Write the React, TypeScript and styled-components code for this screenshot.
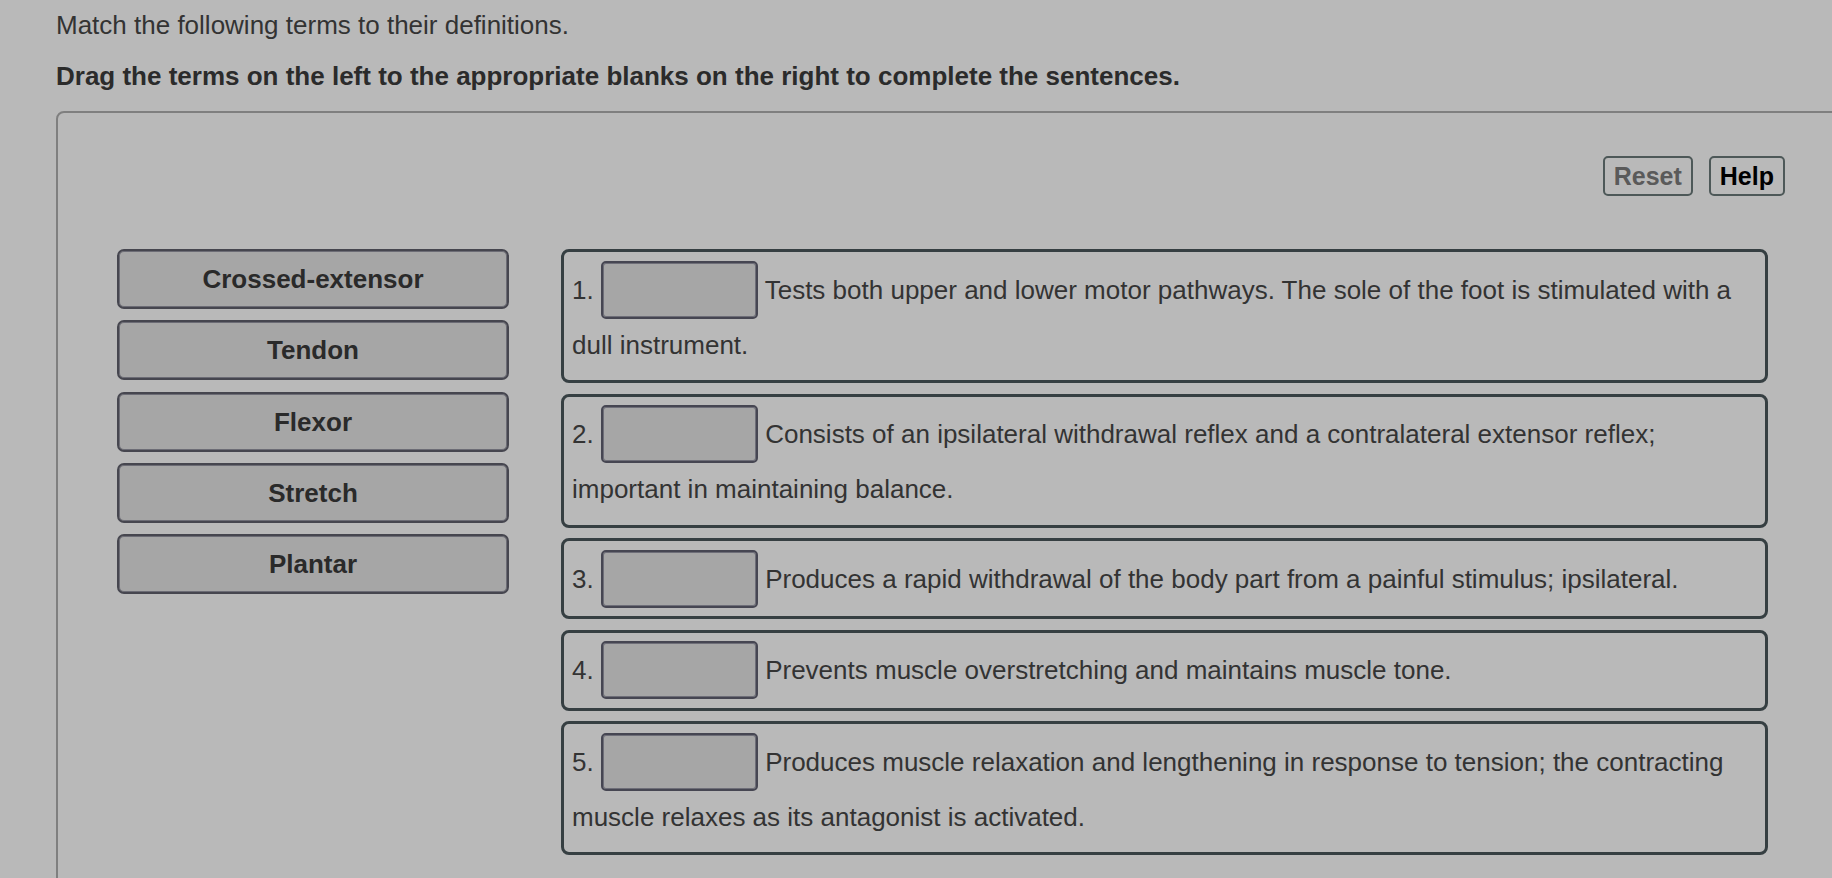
import React from "react";
import styled, { createGlobalStyle } from "styled-components";

const Global = createGlobalStyle`
  html, body {
    margin: 0;
    padding: 0;
    background: #b9b9b9;
    overflow: hidden;
  }
  body {
    font-family: "Liberation Sans", Arial, Helvetica, sans-serif;
    color: #333;
  }
`;

const Page = styled.div`
  padding: 10px 0 0 56px;
  height: 868px;
  box-sizing: content-box;
`;

const Title = styled.p`
  margin: 0;
  font-size: 26px;
  line-height: 30px;
  color: #333;
`;

const Instruction = styled.p`
  margin: 21px 0 0;
  font-size: 26px;
  line-height: 30px;
  font-weight: 700;
  color: #2b2b2b;
`;

const Panel = styled.div`
  margin-top: 20px;
  width: 1800px;
  min-height: 800px;
  border: 2px solid #7f7f7f;
  border-radius: 8px 0 0 0;
`;

const Toolbar = styled.div`
  display: flex;
  justify-content: flex-end;
  gap: 16px;
  width: 1727px;
  padding-top: 43px;
`;

const ToolButton = styled.button<{ $disabled?: boolean }>`
  height: 40px;
  padding: 0 9px;
  border: 2px solid #4d5858;
  border-radius: 5px;
  background: transparent;
  font-family: "Liberation Sans", Arial, sans-serif;
  font-size: 25px;
  line-height: 36px;
  font-weight: 700;
  color: ${(p) => (p.$disabled ? "#5a5a5a" : "#000")};
  cursor: pointer;
`;

const Main = styled.div`
  display: flex;
  align-items: flex-start;
  gap: 52px;
  margin-top: 53px;
  padding-left: 59px;
`;

const TermList = styled.div`
  display: flex;
  flex-direction: column;
  gap: 11.3px;
  width: 392px;
  flex: none;
`;

const Term = styled.div`
  height: 60px;
  box-sizing: border-box;
  border: 2px solid #46464f;
  box-shadow: inset 0 0 0 1px #6c6c75;
  border-radius: 7px;
  background: #a6a6a6;
  text-align: center;
  font-size: 26px;
  font-weight: 700;
  line-height: 54px;
  padding-top: 1px;
  color: #2a2a2a;
`;

const DefList = styled.div`
  display: flex;
  flex-direction: column;
  gap: 10.6px;
  width: 1207px;
  flex: none;
`;

const Definition = styled.div`
  box-sizing: border-box;
  border: 3px solid #363f42;
  border-radius: 8px;
  padding: 8.5px 8px;
  font-size: 26px;
  line-height: 53px;
  color: #333;
`;

const Blank = styled.span`
  display: inline-block;
  box-sizing: border-box;
  width: 157px;
  height: 58px;
  border: 2px solid #464652;
  box-shadow: inset 0 0 0 1px #6e6e78;
  border-radius: 5px;
  background: #a6a6a6;
  vertical-align: -20px;
`;

const terms = ["Crossed-extensor", "Tendon", "Flexor", "Stretch", "Plantar"];

const definitions = [
  "Tests both upper and lower motor pathways. The sole of the foot is stimulated with a dull instrument.",
  "Consists of an ipsilateral withdrawal reflex and a contralateral extensor reflex; important in maintaining balance.",
  "Produces a rapid withdrawal of the body part from a painful stimulus; ipsilateral.",
  "Prevents muscle overstretching and maintains muscle tone.",
  "Produces muscle relaxation and lengthening in response to tension; the contracting muscle relaxes as its antagonist is activated.",
];

export default function App() {
  return (
    <>
      <Global />
      <Page>
        <Title>Match the following terms to their definitions.</Title>
        <Instruction>
          Drag the terms on the left to the appropriate blanks on the right to complete the sentences.
        </Instruction>
        <Panel>
          <Toolbar>
            <ToolButton $disabled>Reset</ToolButton>
            <ToolButton>Help</ToolButton>
          </Toolbar>
          <Main>
            <TermList>
              {terms.map((t) => (
                <Term key={t}>{t}</Term>
              ))}
            </TermList>
            <DefList>
              {definitions.map((d, i) => (
                <Definition key={i}>
                  {i + 1}. <Blank /> {d}
                </Definition>
              ))}
            </DefList>
          </Main>
        </Panel>
      </Page>
    </>
  );
}
